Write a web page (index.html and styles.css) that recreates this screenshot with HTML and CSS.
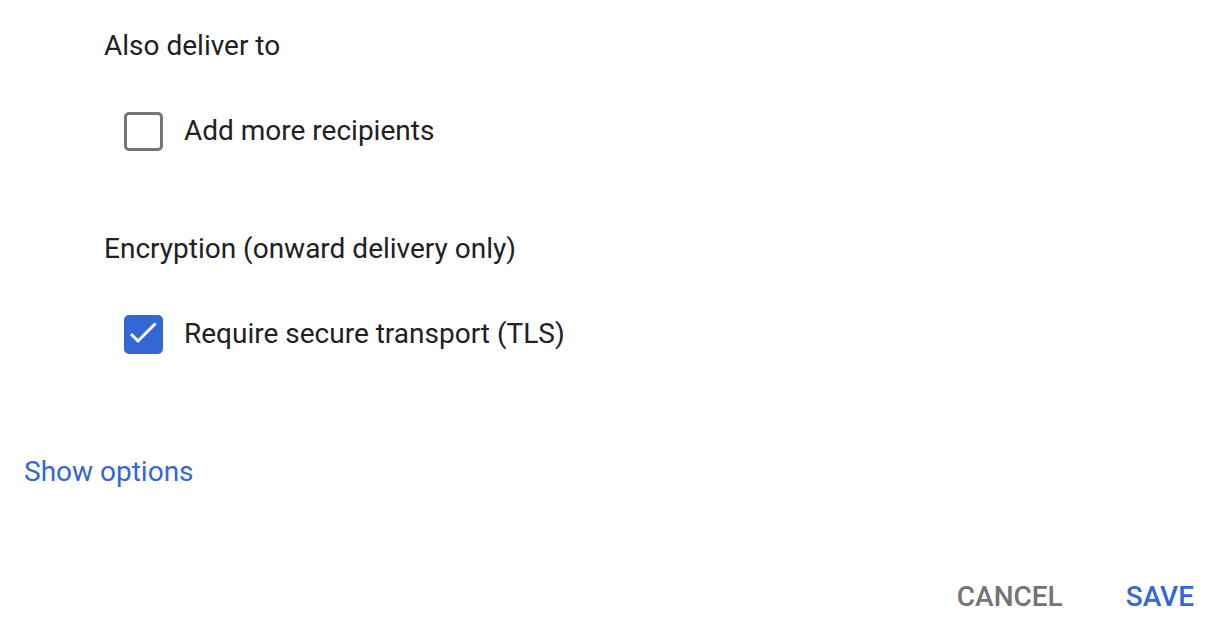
FILE: index.html
```html
<!DOCTYPE html>
<html lang="en">
<head>
  <meta charset="UTF-8" />
  <meta name="viewport" content="width=device-width, initial-scale=1.0"/>
  <title>Routing settings</title>
  <link rel="stylesheet" href="styles.css">
</head>
<body>
  <main class="settings-panel">
    <section class="setting-group">
      <h2 class="group-title">Also deliver to</h2>
      <label class="check-row">
        <span class="check-box"></span>
        <span class="check-label">Add more recipients</span>
      </label>
    </section>

    <section class="setting-group group-spaced">
      <h2 class="group-title">Encryption (onward delivery only)</h2>
      <label class="check-row">
        <span class="check-box is-checked">
          <svg viewBox="0 0 33 33" width="33" height="33" aria-hidden="true">
            <path d="M4 16l7 7L28.5 5.5" fill="none" stroke="#fff" stroke-width="3"/>
          </svg>
        </span>
        <span class="check-label">Require secure transport (TLS)</span>
      </label>
    </section>

    <a class="options-link" href="#">Show options</a>

    <footer class="dialog-actions">
      <button class="action-button action-cancel">CANCEL</button>
      <button class="action-button action-save">SAVE</button>
    </footer>
  </main>
</body>
</html>
```

FILE: styles.css
```css
:root {
  --color-text: #202124;
  --color-muted: #757575;
  --color-primary: #3367d6;
}

body {
  margin: 0;
  background: #fff;
  color: var(--color-text);
  font-family: Roboto, 'Liberation Sans', sans-serif;
  font-size: 28px;
}

.settings-panel {
  display: flex;
  flex-direction: column;
  padding: 28px 18px 0 24px;
}

.setting-group {
  display: flex;
  flex-direction: column;
  gap: 47px;
  padding-left: 80px;
}

.group-spaced {
  margin-top: 80px;
}

.group-title {
  margin: 0;
  font-size: 28px;
  font-weight: 400;
  line-height: 36px;
}

.check-row {
  display: flex;
  align-items: center;
  gap: 21px;
  padding-left: 20px;
  height: 40px;
}

.check-box {
  box-sizing: border-box;
  flex: none;
  width: 39px;
  height: 39px;
  border: 3px solid var(--color-muted);
  border-radius: 5px;
  display: flex;
  align-items: center;
  justify-content: center;
}

.check-box.is-checked {
  background: var(--color-primary);
  border-color: var(--color-primary);
}

.check-label {
  line-height: 36px;
}

.options-link {
  align-self: flex-start;
  margin-top: 100px;
  color: var(--color-primary);
  text-decoration: none;
  line-height: 36px;
}

.dialog-actions {
  display: flex;
  justify-content: flex-end;
  gap: 63px;
  margin-top: 89px;
}

.action-button {
  padding: 0;
  border: none;
  background: none;
  font-family: inherit;
  font-size: 28px;
  font-weight: 500;
  line-height: 36px;
  cursor: pointer;
}

.action-cancel {
  color: var(--color-muted);
}

.action-save {
  color: var(--color-primary);
}
```
